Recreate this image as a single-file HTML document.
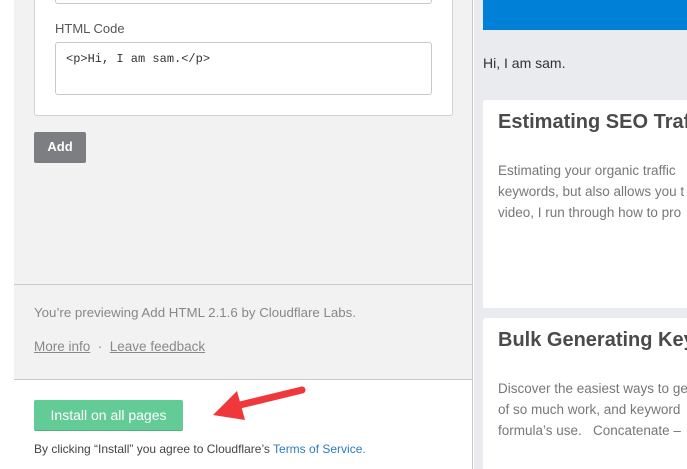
<!DOCTYPE html>
<html><head><style>
*{margin:0;padding:0;box-sizing:border-box}
body{width:687px;height:469px;overflow:hidden;background:#fff;font-family:"Liberation Sans",sans-serif;position:relative}
.abs{position:absolute}
</style></head><body>
<div class="abs" style="left:14px;top:0;width:459px;height:379px;background:#f2f2f2;border-right:1px solid #c8c8c8"></div>
<div class="abs" style="left:14px;top:379px;width:459px;height:90px;background:#fff;border-right:1px solid #c8c8c8;border-top:1px solid #c8c8c8"></div>
<div class="abs" style="left:14px;top:284px;width:459px;height:1px;background:#c8c8c8"></div>
<div class="abs" style="left:34px;top:-4px;width:419px;height:120px;background:#fff;border:1px solid #d3d3d3;border-radius:3px"></div>
<div class="abs" style="left:55px;top:-4px;width:377px;height:8px;border:1px solid #c8c8c8;border-radius:3px"></div>
<div class="abs" style="left:55px;top:21px;font-size:13px;color:#555">HTML Code</div>
<div class="abs" style="left:55px;top:42px;width:377px;height:53px;border:1px solid #c8c8c8;border-radius:3px;padding:9px 10px;font-family:'Liberation Mono',monospace;font-size:12px;color:#333">&lt;p&gt;Hi, I am sam.&lt;/p&gt;</div>
<div class="abs" style="left:34px;top:132px;width:52px;height:31px;background:#7d7e82;border-radius:2px;color:#fff;font-size:13px;font-weight:bold;text-align:center;line-height:30px">Add</div>
<div class="abs" style="left:34px;top:305px;font-size:13.3px;color:#888">You’re previewing Add HTML 2.1.6 by Cloudflare Labs.</div>
<div class="abs" style="left:34px;top:339px;font-size:13.5px;color:#888"><span style="text-decoration:underline">More info</span> &nbsp;·&nbsp; <span style="text-decoration:underline">Leave feedback</span></div>
<div class="abs" style="left:34px;top:400px;width:149px;height:31px;background:#63cb96;border-radius:2px;border-bottom:1px solid #4fb07d;color:#fff;font-size:14px;text-align:center;line-height:30px">Install on all pages</div>
<div class="abs" style="left:34px;top:442px;font-size:12px;color:#444">By clicking “Install” you agree to Cloudflare’s <span style="color:#2f7bbf">Terms of Service.</span></div>
<svg class="abs" style="left:205px;top:383px" width="105" height="40"><path d="M97 7 L35 22" stroke="#f0373a" stroke-width="7" stroke-linecap="round"/><path d="M8 32 L32 8 L40 37 Z" fill="#f0373a"/></svg>
<div class="abs" style="left:474px;top:0;width:213px;height:469px;background:#e9ebee;overflow:hidden">
<div class="abs" style="left:9px;top:0;width:204px;height:30px;background:#0080d6"></div>
<div class="abs" style="left:9px;top:55px;font-size:14px;color:#333">Hi, I am sam.</div>
<div class="abs" style="left:9px;top:100px;width:204px;height:208px;background:#fff;border-radius:3px 0 0 0"></div>
<div class="abs" style="left:24px;top:111px;font-size:20px;font-weight:bold;color:#4a4a4a;white-space:nowrap">Estimating SEO Traffic</div>
<div class="abs" style="left:24px;top:160px;font-size:13.5px;line-height:21px;color:#777;white-space:nowrap">Estimating your organic traffic<br>keywords, but also allows you t<br>video, I run through how to pro</div>
<div class="abs" style="left:9px;top:318px;width:204px;height:151px;background:#fff;border-radius:3px 0 0 0"></div>
<div class="abs" style="left:24px;top:329px;font-size:20px;font-weight:bold;color:#4a4a4a;white-space:nowrap">Bulk Generating Keywords</div>
<div class="abs" style="left:24px;top:378px;font-size:13.5px;line-height:21px;color:#777;white-space:nowrap">Discover the easiest ways to ge<br>of so much work, and keyword<br>formula’s use. &nbsp; Concatenate –</div>
</div>
</body></html>
